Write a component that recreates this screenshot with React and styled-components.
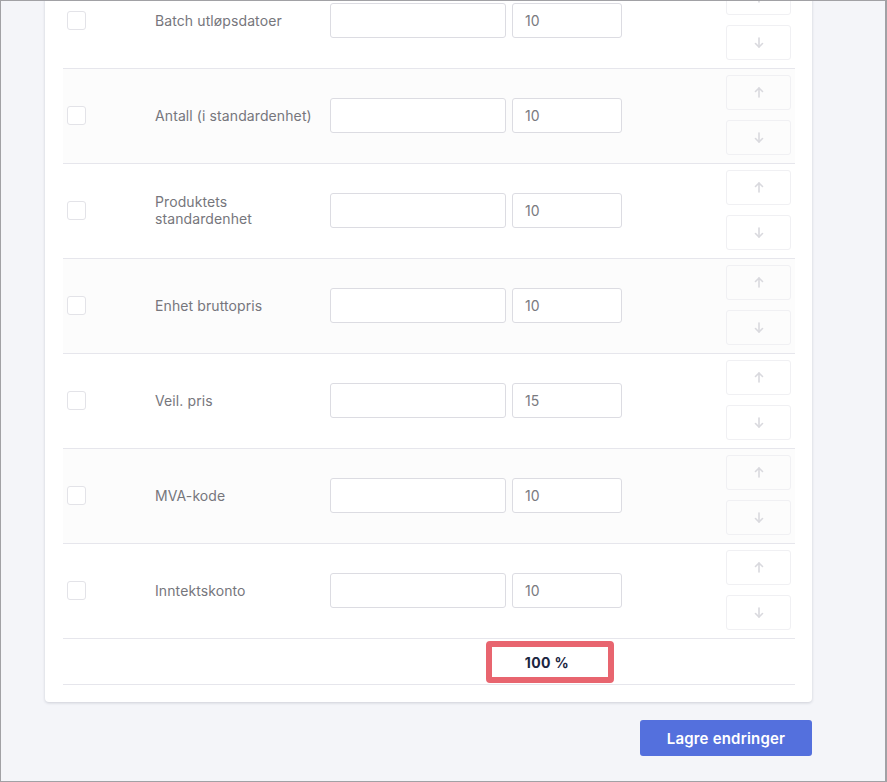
import React from 'react';
import styled, { createGlobalStyle } from 'styled-components';

const GlobalStyle = createGlobalStyle`
  html, body {
    margin: 0;
    padding: 0;
    background: #f4f5f9;
    font-family: Inter, "Liberation Sans", Arial, sans-serif;
  }
  * { box-sizing: border-box; }
`;

const Frame = styled.div`
  width: 887px;
  height: 782px;
  border: 1px solid #a1a1a5;
  border-right-width: 2px;
  background: #f4f5f9;
  overflow: hidden;
`;

const Content = styled.div`
  width: 767px;
  margin: -28px 0 0 44px;
  display: flex;
  flex-direction: column;
  align-items: flex-end;
  gap: 18px;
`;

const Card = styled.div`
  width: 100%;
  background: #fff;
  border-radius: 4px;
  box-shadow: 0 1px 3px rgba(30, 35, 60, 0.18);
  padding: 0 17px 17px 18px;
`;

const Row = styled.div`
  display: grid;
  grid-template-columns: 88px 175px 182px 110px 1fr 65px;
  align-items: center;
  padding: 6px 4px 8px 4px;
  border-top: 1px solid #e6e6ec;
  background: ${p => (p.$shaded ? '#fcfcfc' : '#fff')};
`;

const Checkbox = styled.span`
  display: block;
  width: 19px;
  height: 19px;
  border: 1px solid #e3e3e8;
  border-radius: 3px;
  background: #fff;
`;

const Label = styled.span`
  font-size: 14px;
  line-height: 17px;
  color: #76767c;
  padding-right: 14px;
  letter-spacing: 0.1px;
`;

const Input = styled.div`
  width: ${p => p.$width}px;
  height: 35px;
  border: 1px solid #dcdce2;
  border-radius: 3px;
  background: #fff;
  padding: 1px 12px 0;
  display: flex;
  align-items: center;
  font-size: 14px;
  color: #7a7a80;
`;

const Arrows = styled.div`
  display: flex;
  flex-direction: column;
  gap: 10px;
`;

const ArrowButton = styled.button`
  width: 65px;
  height: 35px;
  border: 1px solid #f0f0f3;
  border-radius: 3px;
  background: transparent;
  display: flex;
  align-items: center;
  justify-content: center;
  padding: 0;
  color: #d9d9de;
`;

const FooterRow = styled.div`
  display: flex;
  align-items: center;
  height: 47px;
  padding: 2px 0 1px 423px;
  border-top: 1px solid #e6e6ec;
  border-bottom: 1px solid #e6e6ec;
`;

const TotalBox = styled.div`
  width: 128px;
  height: 42px;
  border: 6px solid #e8656f;
  border-radius: 4px;
  background: #fff;
  display: flex;
  align-items: center;
  justify-content: center;
  padding-right: 6px;
  font-size: 14px;
  font-weight: 700;
  letter-spacing: 0.4px;
  color: #1b2541;
`;

const SaveButton = styled.button`
  width: 172px;
  height: 36px;
  border: none;
  border-radius: 3px;
  background: #5470dd;
  color: #fff;
  font-family: inherit;
  font-size: 15px;
  font-weight: 600;
  letter-spacing: 0.2px;
`;

const Arrow = ({ down }) => (
  <svg width="10" height="11" viewBox="0 0 10 11" fill="none" stroke="currentColor" strokeWidth="1.6" strokeLinecap="round" strokeLinejoin="round">
    {down ? (
      <>
        <path d="M5 1v9" />
        <path d="M1.5 6.5L5 10l3.5-3.5" />
      </>
    ) : (
      <>
        <path d="M5 10V1" />
        <path d="M1.5 4.5L5 1l3.5 3.5" />
      </>
    )}
  </svg>
);

const fields = [
  { label: 'Batch utløpsdatoer', value: '10' },
  { label: 'Antall (i standardenhet)', value: '10' },
  { label: 'Produktets standardenhet', value: '10' },
  { label: 'Enhet bruttopris', value: '10' },
  { label: 'Veil. pris', value: '15' },
  { label: 'MVA-kode', value: '10' },
  { label: 'Inntektskonto', value: '10' },
];

export default function App() {
  return (
    <>
      <GlobalStyle />
      <Frame>
        <Content>
          <Card>
            {fields.map((f, i) => (
              <Row key={f.label} $shaded={i % 2 === 1}>
                <Checkbox />
                <Label>{f.label}</Label>
                <Input $width={176} />
                <Input $width={110}>{f.value}</Input>
                <span />
                <Arrows>
                  <ArrowButton><Arrow /></ArrowButton>
                  <ArrowButton><Arrow down /></ArrowButton>
                </Arrows>
              </Row>
            ))}
            <FooterRow>
              <TotalBox>100 %</TotalBox>
            </FooterRow>
          </Card>
          <SaveButton>Lagre endringer</SaveButton>
        </Content>
      </Frame>
    </>
  );
}
